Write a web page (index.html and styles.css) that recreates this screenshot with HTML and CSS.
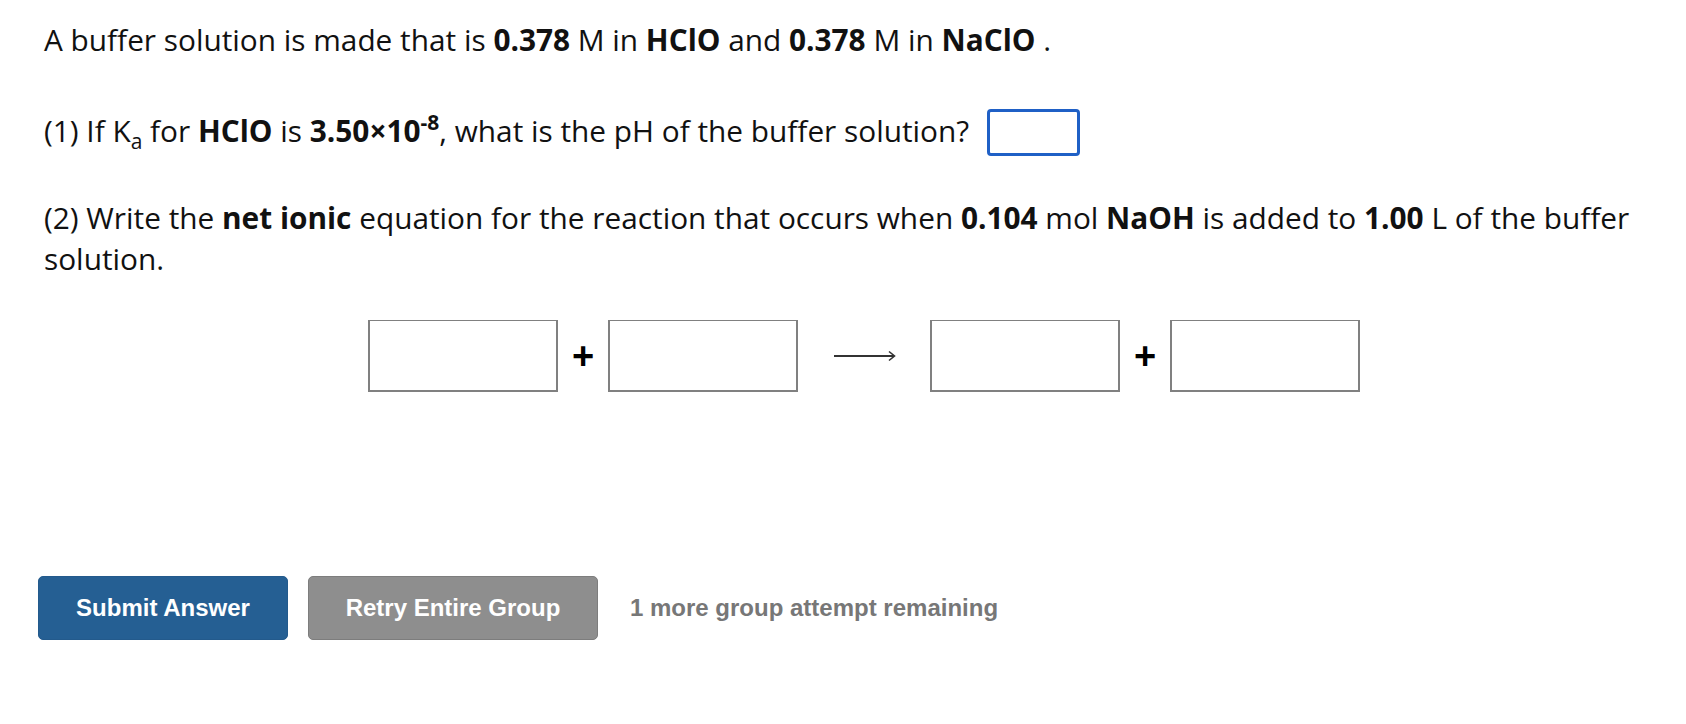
FILE: index.html
```html
<!DOCTYPE html>
<html>
<head>
<meta charset="utf-8">
<link rel="stylesheet" href="styles.css">
</head>
<body>
<div class="page">
  <p class="q q1">A buffer solution is made that is <b>0.378</b> M in <b>HClO</b> and <b>0.378</b> M in <b>NaClO</b> .</p>
  <p class="q q2">(1) If K<sub>a</sub> for <b>HClO</b> is <b>3.50×10<sup>-8</sup></b>, what is the pH of the buffer solution? <span class="ans"></span></p>
  <p class="q q3">(2) Write the <b>net ionic</b> equation for the reaction that occurs when <b>0.104</b> mol <b>NaOH</b> is added to <b>1.00</b> L of the buffer solution.</p>
  <div class="eq">
    <span class="box"></span>
    <span class="plus">+</span>
    <span class="box"></span>
    <span class="arrow"><svg width="62" height="14" viewBox="0 0 62 14"><line x1="0" y1="7" x2="60" y2="7" stroke="#333" stroke-width="2.2"/><path d="M55 2.5 L60.5 7 L55 11.5" fill="none" stroke="#333" stroke-width="1.6"/></svg></span>
    <span class="box"></span>
    <span class="plus">+</span>
    <span class="box"></span>
  </div>
  <div class="actions">
    <button class="btn btn-submit">Submit Answer</button>
    <button class="btn btn-retry">Retry Entire Group</button>
    <span class="remaining">1 more group attempt remaining</span>
  </div>
</div>
</body>
</html>
```

FILE: styles.css
```css
html, body {
  margin: 0;
  padding: 0;
  background: #fff;
}
.page {
  padding: 19px 0 0 44px;
  font-family: "Open Sans", "DejaVu Sans", sans-serif;
  font-size: 29.8px;
  color: #111;
}
.q {
  margin: 0;
  line-height: 41px;
  max-width: 1640px;
}
.q b {
  font-weight: 700;
}
.q sub, .q sup {
  font-size: 21px;
  line-height: 0;
}
.q sub {
  vertical-align: -7px;
}
.q sup {
  vertical-align: 12px;
}
.q2 {
  margin-top: 50px;
}
.q3 {
  margin-top: 39px;
}
.ans {
  display: inline-block;
  width: 87px;
  height: 41px;
  border: 3px solid #1f60c6;
  border-radius: 4px;
  vertical-align: middle;
  margin-left: 10px;
  position: relative;
  top: -2px;
}
.eq {
  display: flex;
  align-items: center;
  margin: 41px 0 0 324px;
}
.box {
  display: block;
  width: 186px;
  height: 69px;
  border: 2px solid #808080;
  border-top-width: 1.5px;
}
.plus {
  width: 50px;
  text-align: center;
  font-family: "Liberation Sans", Arial, sans-serif;
  font-weight: 700;
  font-size: 38px;
  line-height: 1;
  color: #000;
}
.arrow {
  width: 130px;
  display: flex;
  justify-content: center;
  padding-left: 2px;
}
.arrow svg {
  display: block;
}
.actions {
  display: flex;
  align-items: center;
  gap: 20px;
  margin: 184px 0 0 -6px;
}
.btn {
  height: 64px;
  border-radius: 5px;
  font-family: "Liberation Sans", Arial, sans-serif;
  font-weight: 700;
  font-size: 24px;
  color: #fff;
  padding: 0;
  cursor: pointer;
}
.btn-submit {
  width: 250px;
  background: #255f93;
  border: 1px solid #235a8c;
}
.btn-retry {
  width: 290px;
  background: #8e8e8e;
  border: 1.5px solid #7d7d7d;
}
.remaining {
  margin-left: 12px;
  font-family: "Liberation Sans", Arial, sans-serif;
  font-weight: 700;
  font-size: 24px;
  color: #777;
}
```
